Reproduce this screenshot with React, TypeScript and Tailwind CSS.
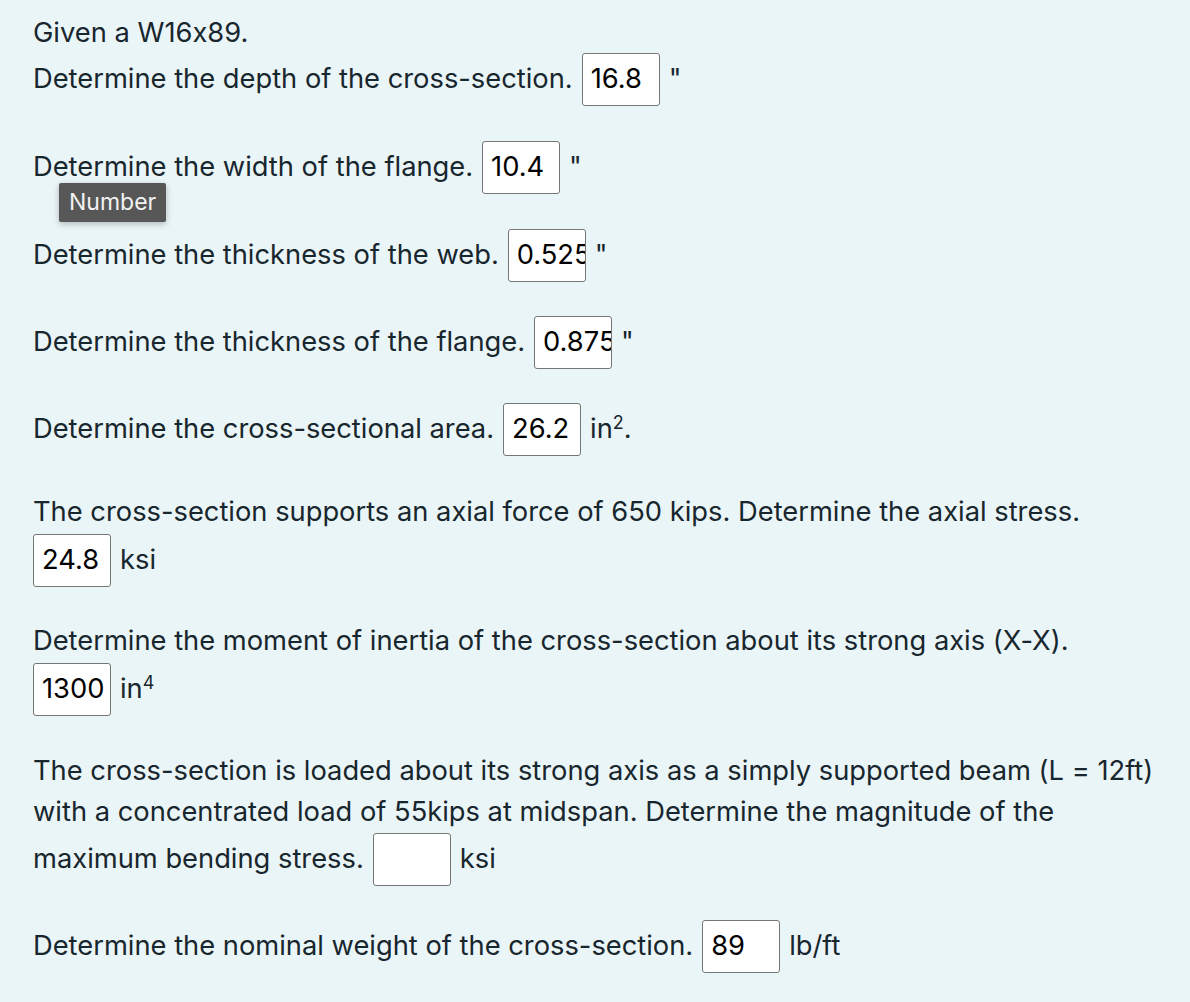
import type { ReactNode } from "react";

const Box = ({ value }: { value?: string }) => (
  <div className="flex h-[53px] w-[78px] shrink-0 items-center overflow-hidden whitespace-nowrap rounded-[3px] border border-[#767676] bg-white pl-[8px] text-black">
    {value}
  </div>
);

const Row = ({ className, children }: { className: string; children: ReactNode }) => (
  <div className={"relative flex items-center gap-[9px] " + className}>{children}</div>
);

export default function App() {
  return (
    <div
      className="min-h-[1002px] w-[1190px] bg-[#eaf5f7] pl-[33px] text-[27.3px] text-[#18262e] [font-feature-settings:'calt'_0]"
      style={{ fontFamily: "Inter, 'Liberation Sans', sans-serif" }}
    >
      <div className="flex flex-col pt-[13px]">
        <Row className="h-[40px]">
          <span>Given a W16x89.</span>
        </Row>

        <Row className="h-[53px]">
          <span>Determine the depth of the cross-section.</span>
          <Box value="16.8" />
          <span>"</span>
        </Row>

        <Row className="mt-[35px] h-[53px]">
          <span>Determine the width of the flange.</span>
          <Box value="10.4" />
          <span>"</span>
          {/* tooltip */}
          <div className="absolute left-[26px] top-[42px] rounded-[2px] bg-[#565756] px-[10px] py-[4px] text-[23px] leading-[31px] text-[#f2f2f2] shadow-[0_2px_6px_rgba(0,0,0,0.25)]">
            Number
          </div>
        </Row>

        <Row className="mt-[35px] h-[53px]">
          <span>Determine the thickness of the web.</span>
          <Box value="0.525" />
          <span>"</span>
        </Row>

        <Row className="mt-[34px] h-[53px]">
          <span>Determine the thickness of the flange.</span>
          <Box value="0.875" />
          <span>"</span>
        </Row>

        <Row className="mt-[34px] h-[53px]">
          <span>Determine the cross-sectional area.</span>
          <Box value="26.2" />
          <span>
            in<sup className="text-[18px]">2</sup>.
          </span>
        </Row>

        <Row className="mt-[35px] h-[43px]">
          <span>The cross-section supports an axial force of 650 kips. Determine the axial stress.</span>
        </Row>
        <Row className="h-[53px]">
          <Box value="24.8" />
          <span>ksi</span>
        </Row>

        <Row className="mt-[33px] h-[43px]">
          <span>Determine the moment of inertia of the cross-section about its strong axis (X-X).</span>
        </Row>
        <Row className="h-[53px]">
          <Box value="1300" />
          <span>
            in<sup className="text-[18px]">4</sup>
          </span>
        </Row>

        <Row className="mt-[35px] h-[41px]">
          <span>The cross-section is loaded about its strong axis as a simply supported beam (L = 12ft)</span>
        </Row>
        <Row className="h-[41px]">
          <span>with a concentrated load of 55kips at midspan. Determine the magnitude of the</span>
        </Row>
        <Row className="h-[53px]">
          <span>maximum bending stress.</span>
          <Box />
          <span>ksi</span>
        </Row>

        <Row className="mt-[34px] h-[53px]">
          <span>Determine the nominal weight of the cross-section.</span>
          <Box value="89" />
          <span>lb/ft</span>
        </Row>
      </div>
    </div>
  );
}
